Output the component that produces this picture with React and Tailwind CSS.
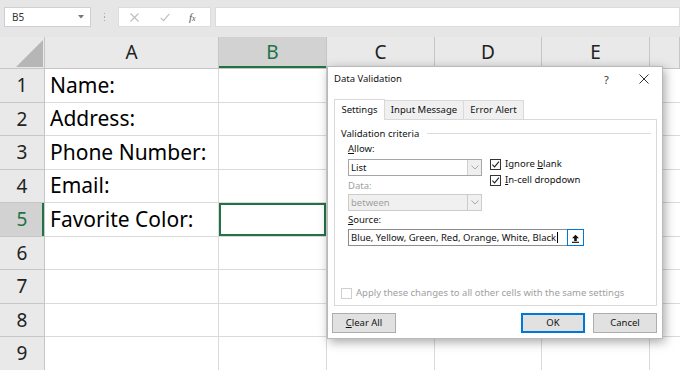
import React from 'react';

const cols = ['A', 'B', 'C', 'D', 'E', ''];
const rows = [
    { n: 1, a: 'Name:' },
    { n: 2, a: 'Address:' },
    { n: 3, a: 'Phone Number:' },
    { n: 4, a: 'Email:' },
    { n: 5, a: 'Favorite Color:', sel: true },
    { n: 6, a: '' },
    { n: 7, a: '' },
    { n: 8, a: '' },
    { n: 9, a: '' },
];

const gridCols = 'grid grid-cols-[45px_174px_108px_108px_107px_108px_1fr]';

const CheckBox = ({ checked, disabled }) => (
    <span className={`w-[11px] h-[11px] border flex items-center justify-center bg-white ${disabled ? 'border-[#cfcfcf]' : 'border-[#333]'}`}>
        {checked && (
            <svg width="9" height="9" viewBox="0 0 9 9">
                <path d="M1.3 4.6 L3.6 6.9 L7.9 1.6" fill="none" stroke="#222" strokeWidth="1.1" />
            </svg>
        )}
    </span>
);

const Select = ({ value, disabled, className }) => (
    <div className={`h-[17px] w-[134px] border flex items-stretch ${disabled ? 'border-[#cccccc] bg-[#f0f0f0] text-[#a0a0a0]' : 'border-[#a6a6a6] bg-white text-[#111]'} ${className || ''}`}>
        <div className="flex-1 pl-[2px] leading-[15px]">{value}</div>
        <div className={`w-[14px] border-l flex items-center justify-center ${disabled ? 'border-[#cccccc]' : 'border-[#cfcfcf] bg-[#efefef]'}`}>
            <svg width="8" height="5" viewBox="0 0 8 5">
                <path d="M0.5 0.5 L4 4 L7.5 0.5" fill="none" stroke="#a8a8a8" strokeWidth="1" />
            </svg>
        </div>
    </div>
);

const DataValidation = () => (
    <div className="absolute left-[327px] top-[66px] w-[336px] h-[273px] bg-white border border-[#b9b9b9] shadow-[2px_3px_10px_rgba(0,0,0,0.35)] text-[9.5px] text-[#111] font-['Noto_Sans',sans-serif]">
        {/** Title bar */}
        <div className="h-[24px] flex items-center pl-[6px] relative">
            <span className="text-[9.5px]">Data Validation</span>
            <span className="absolute left-[276px] top-[5px] text-[11px] text-[#333]">?</span>
            <svg className="absolute left-[311px] top-[7px]" width="10" height="10" viewBox="0 0 10 10">
                <path d="M0.5 0.5 L9.5 9.5 M9.5 0.5 L0.5 9.5" stroke="#333" strokeWidth="1" />
            </svg>
        </div>
        {/** Tabs */}
        <div className="mt-[7px] ml-[6px] flex items-end h-[21px]">
            <div className="h-[21px] w-[51px] bg-white border border-[#d9d9d9] border-b-0 flex items-center justify-center relative z-10 -mb-[1px]">Settings</div>
            <div className="h-[19px] w-[79px] bg-[#f0f0f0] border border-[#d9d9d9] border-l-0 border-b-0 flex items-center justify-center">Input Message</div>
            <div className="h-[19px] w-[60px] bg-[#f0f0f0] border border-[#d9d9d9] border-l-0 border-b-0 flex items-center justify-center">Error Alert</div>
        </div>
        {/** Tab panel */}
        <div className="ml-[6px] w-[323px] h-[187px] border border-[#d9d9d9] bg-white">
            <div className="pt-[6px] pl-[6px] pr-[5px] flex items-center h-[20px]">
                <span className="leading-[13px]">Validation criteria</span>
                <div className="flex-1 ml-[8px] border-t border-[#dcdcdc]" />
            </div>
            <div className="pl-[13px] mt-[2px] flex gap-[8px]">
                <div className="w-[134px] flex flex-col">
                    <div className="h-[13px] leading-[13px]"><span className="underline">A</span>llow:</div>
                    <Select value="List" className="mt-[4px]" />
                    <div className="mt-[3px] h-[13px] leading-[13px] text-[#a0a0a0]">Data:</div>
                    <Select value="between" disabled className="mt-[2px]" />
                </div>
                <div className="pt-[16px] flex flex-col gap-[4px]">
                    <div className="h-[12px] flex items-center gap-[4px]">
                        <CheckBox checked />
                        <span>Ignore <span className="underline">b</span>lank</span>
                    </div>
                    <div className="h-[12px] flex items-center gap-[4px]">
                        <CheckBox checked />
                        <span><span className="underline">I</span>n-cell dropdown</span>
                    </div>
                </div>
            </div>
            <div className="pl-[13px] mt-[2px]">
                <div className="h-[13px] leading-[13px]"><span className="underline">S</span>ource:</div>
                <div className="mt-[3px] w-[236px] h-[17px] border border-[#8c8c8c] flex items-stretch bg-white">
                    <div className="flex-1 pl-[2px] leading-[15px] flex items-center">
                        <span>Blue, Yellow, Green, Red, Orange, White, Black</span>
                        <span className="w-px h-[11px] bg-black ml-[1px]" />
                    </div>
                    <div className="w-[17px] border border-[#0078d7] -m-px flex items-center justify-center bg-white">
                        <svg width="9" height="10" viewBox="0 0 9 10">
                            <path d="M4.5 1.8 L1 5.3 H3.2 V8 H5.8 V5.3 H8 Z" fill="#111" />
                            <path d="M1 9.3 H8" stroke="#111" strokeWidth="1.2" />
                        </svg>
                    </div>
                </div>
            </div>
            <div className="pl-[6px] mt-[41px] h-[12px] flex items-center gap-[4px] text-[#a0a0a0]">
                <CheckBox disabled />
                <span>Apply these changes to all other cells with the same settings</span>
            </div>
        </div>
        {/** Buttons */}
        <div className="mt-[7px] pl-[4px] pr-[5px] flex items-center">
            <div className="w-[64px] h-[20px] bg-[#e1e1e1] border border-[#adadad] flex items-center justify-center"><span><span className="underline">C</span>lear All</span></div>
            <div className="flex-1" />
            <div className="w-[64px] h-[20px] bg-[#e1e1e1] border-2 border-[#0078d7] flex items-center justify-center">OK</div>
            <div className="w-[64px] h-[20px] ml-[8px] bg-[#e1e1e1] border border-[#adadad] flex items-center justify-center">Cancel</div>
        </div>
    </div>
);

export default function App() {
    return (
        <div className="relative w-[680px] h-[370px] overflow-hidden bg-white font-['Noto_Sans',sans-serif]">
            {/** Formula bar */}
            <div className="h-[37px] bg-[#e6e6e6] flex items-start pt-[7px]">
                <div className="ml-[4px] w-[87px] h-[20px] bg-white border border-[#cfcfcf] flex items-center pl-[7px] pr-[6px] text-[10px] text-[#333]">
                    <span className="flex-1">B5</span>
                    <svg width="6" height="4" viewBox="0 0 6 4"><path d="M0 0 H6 L3 3.5 Z" fill="#777" /></svg>
                </div>
                <div className="w-[27px] h-[20px] flex flex-col items-center justify-center gap-[2px]">
                    <span className="w-[1.5px] h-[1.5px] bg-[#aaa]" />
                    <span className="w-[1.5px] h-[1.5px] bg-[#aaa]" />
                    <span className="w-[1.5px] h-[1.5px] bg-[#aaa]" />
                </div>
                <div className="w-[93px] h-[20px] bg-white border border-[#dcdcdc] flex items-center">
                    <svg className="ml-[11px]" width="9" height="9" viewBox="0 0 9 9"><path d="M0.5 0.5 L8.5 8.5 M8.5 0.5 L0.5 8.5" stroke="#bdbdbd" strokeWidth="1.1" /></svg>
                    <svg className="ml-[21px]" width="10" height="9" viewBox="0 0 10 9"><path d="M0.7 4.8 L3.6 7.6 L9.3 0.8" fill="none" stroke="#bdbdbd" strokeWidth="1.1" /></svg>
                    <span className="ml-[19px] font-['Liberation_Serif',serif] italic text-[11px] text-[#555] leading-none">f<span className="text-[8px]">x</span></span>
                </div>
                <div className="ml-[4px] flex-1 h-[20px] bg-white border border-[#dcdcdc]" />
            </div>
            {/** Column headers */}
            <div className={`${gridCols} h-[32px] bg-[#e9e9e9] border-b border-[#c6c6c6]`}>
                <div className="border-r border-[#c6c6c6] flex items-end justify-end pr-[1px] pb-[1px]">
                    <svg width="27" height="27" viewBox="0 0 27 27"><path d="M27 0 V27 H0 Z" fill="#b6b6b6" /></svg>
                </div>
                {cols.map((c, i) => (
                    <div
                        key={i}
                        className={`flex items-center justify-center text-[19px] border-r border-[#c6c6c6] ${c === 'B' ? 'bg-[#d2d2d2] text-[#217346] shadow-[inset_0_-2px_0_#217346]' : 'text-[#222]'}`}
                    >
                        {c}
                    </div>
                ))}
            </div>
            {/** Rows */}
            {rows.map((r) => (
                <div key={r.n} className={`${gridCols} h-[33.5px]`}>
                    <div className={`flex items-center justify-center text-[19px] border-r border-b border-[#c6c6c6] ${r.sel ? 'bg-[#d2d2d2] text-[#217346] shadow-[inset_-2px_0_0_#217346]' : 'bg-[#e9e9e9] text-[#222]'}`}>
                        {r.n}
                    </div>
                    <div className="border-r border-b border-[#dadada] flex items-center pl-[5px] text-[21px] text-black whitespace-nowrap leading-none">
                        {r.a}
                    </div>
                    <div className={`border-r border-b border-[#dadada] ${r.sel ? 'shadow-[inset_0_0_0_2px_#217346]' : ''}`} />
                    <div className="border-r border-b border-[#dadada]" />
                    <div className="border-r border-b border-[#dadada]" />
                    <div className="border-r border-b border-[#dadada]" />
                    <div className="border-b border-[#dadada]" />
                </div>
            ))}
            <DataValidation />
        </div>
    );
}
